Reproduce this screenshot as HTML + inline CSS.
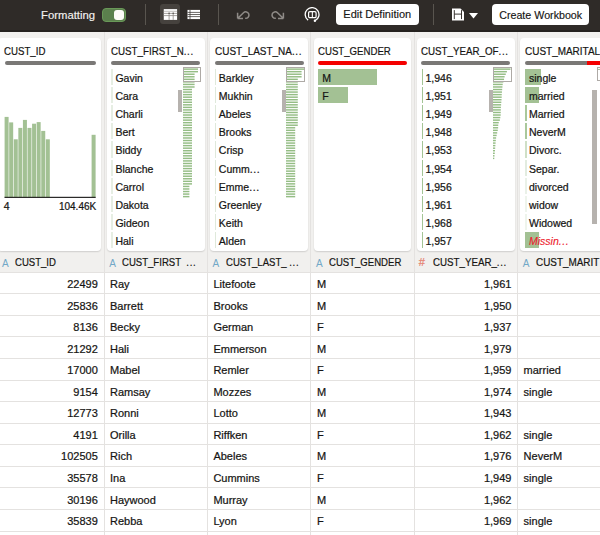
<!DOCTYPE html><html><head><meta charset="utf-8"><style>
*{box-sizing:border-box;margin:0;padding:0}
html,body{width:600px;height:535px;overflow:hidden}
body{position:relative;background:#f1f0ee;font-family:"Liberation Sans",sans-serif;color:#161513}
.a{position:absolute}
.t{position:absolute;white-space:nowrap;line-height:1}
#tb{position:absolute;left:0;top:0;width:600px;height:31.5px;background:#2f2b28}
.vsep{position:absolute;width:1px;background:#59554f}
.btn{position:absolute;background:#fff;border-radius:4px}
.card{position:absolute;top:37.9px;height:212.9px;background:#fff;border-radius:4px;box-shadow:0 1px 1.5px rgba(0,0,0,0.14)}
.up{font-size:11px;transform:scaleX(0.87);transform-origin:0 0;-webkit-text-stroke:0.2px #161513}
.bar{position:absolute;height:4.2px;border-radius:2.1px;background:#7a7876}
.rt{font-size:10.5px;-webkit-text-stroke:0.22px #161513}
.tc{font-size:11px;-webkit-text-stroke:0.22px #161513}
</style></head><body>
<div id="tb">
<div class="t" style="left:41.1px;top:9.5px;font-size:11.3px;color:#f4f2f0;-webkit-text-stroke:0.15px #f4f2f0">Formatting</div>
<div class="a" style="left:101.7px;top:7.6px;width:24.2px;height:14px;border-radius:4px;background:#5b804d;border:1px solid #699858"></div>
<div class="a" style="left:113.8px;top:9.6px;width:10.4px;height:10.2px;border-radius:3px;background:#fcfaf8"></div>
<div class="vsep" style="left:144.5px;top:4.1px;height:20.8px"></div>
<div class="a" style="left:159.6px;top:4.1px;width:20.4px;height:20.4px;border-radius:3px;background:#46423e"></div>
<svg class="a" style="left:163px;top:8px" width="15" height="13" viewBox="0 0 15 13">
<rect x="0.75" y="1.1" width="13.35" height="10.8" fill="#fff"/>
<path d="M0.75 3.3H14.1" stroke="#a8a4a0" stroke-width="0.7"/>
<path d="M0.75 5.4H14.1 M0.75 7.6H14.1" stroke="#8a8682" stroke-width="0.75"/>
<path d="M6.1 4.2V11.9 M10.2 4.2V11.9" stroke="#8a8682" stroke-width="0.8"/>
<path d="M5.4 5.4H6.8 M9.5 5.4H10.9" stroke="#5a5652" stroke-width="1"/>
</svg>
<svg class="a" style="left:187px;top:9px" width="14" height="11" viewBox="0 0 14 11">
<rect x="0.5" y="0.9" width="12.5" height="9.2" fill="#fff"/>
<path d="M0.5 3.4H13 M0.5 5.5H13 M0.5 7.6H13" stroke="#3a3632" stroke-width="0.75"/>
<path d="M3 0.9V10.1" stroke="#3a3632" stroke-width="0.8"/>
</svg>
<div class="vsep" style="left:218px;top:4.1px;height:20.8px"></div>
<svg class="a" style="left:235.5px;top:9px" width="16" height="12" viewBox="0 0 16 12"><path d="M1.6 9.5H7.0 M1.6 9.5V3.8 M1.6 9.5L7.49 3.79 A3.2 3.2 0 1 1 9.19 9.2" fill="none" stroke="#8f8b87" stroke-width="1.5" stroke-linecap="butt" stroke-linejoin="miter"/></svg>
<svg class="a" style="left:268.9px;top:9px;transform:scaleX(-1)" width="16" height="12" viewBox="0 0 16 12"><path d="M1.6 9.5H7.0 M1.6 9.5V3.8 M1.6 9.5L7.49 3.79 A3.2 3.2 0 1 1 9.19 9.2" fill="none" stroke="#8f8b87" stroke-width="1.5" stroke-linecap="butt" stroke-linejoin="miter"/></svg>
<svg class="a" style="left:304px;top:7px" width="17" height="17" viewBox="0 0 17 17">
<path d="M4.14 13.15 A6.9 6.9 0 1 1 11.02 13.75" fill="none" stroke="#fff" stroke-width="1.3"/>
<rect x="4.6" y="4.6" width="7.5" height="6.1" rx="1.3" fill="none" stroke="#fff" stroke-width="1.2"/>
<path d="M8.35 4.6v6.1" stroke="#fff" stroke-width="1.1"/>
<circle cx="10.9" cy="13.7" r="1.2" fill="#fff"/>
</svg>
<div class="btn" style="left:336.2px;top:4.2px;width:83px;height:20.8px"></div>
<div class="t" style="left:343.3px;top:9.4px;font-size:11px;color:#161513;-webkit-text-stroke:0.15px #161513">Edit Definition</div>
<div class="vsep" style="left:433px;top:4.1px;height:20.8px"></div>
<svg class="a" style="left:452px;top:8px" width="13" height="13" viewBox="0 0 13 13">
<path d="M0 0.4H8.5L12 3.9V12.6H0Z" fill="#fff"/>
<path d="M2.3 2.1V11.1 M9.5 2.1V11.1 M2.3 6.1H9.5" fill="none" stroke="#2f2b28" stroke-width="0.95"/>
</svg>
<svg class="a" style="left:469.3px;top:12.7px" width="9" height="6" viewBox="0 0 9 6"><path d="M0 0H9L4.5 5.6Z" fill="#fff"/></svg>
<div class="btn" style="left:492px;top:4px;width:97.3px;height:20.8px"></div>
<div class="t" style="left:499.2px;top:9.5px;font-size:10.7px;color:#161513;-webkit-text-stroke:0.15px #161513">Create Workbook</div>
<div class="a" style="left:0;top:30px;width:600px;height:1.5px;background:#25221f"></div>
</div>
<div class="a" style="left:103.5px;top:31.5px;width:1px;height:504px;background:#e4e2e0"></div>
<div class="a" style="left:206.9px;top:31.5px;width:1px;height:504px;background:#e4e2e0"></div>
<div class="a" style="left:310.4px;top:31.5px;width:1px;height:504px;background:#e4e2e0"></div>
<div class="a" style="left:413.6px;top:31.5px;width:1px;height:504px;background:#e4e2e0"></div>
<div class="a" style="left:517.1px;top:31.5px;width:1px;height:504px;background:#e4e2e0"></div>
<div class="card" style="left:-2px;width:103.2px"></div>
<div class="t up" style="left:3.6px;top:46.0px;transform:scaleX(0.88)">CUST_ID</div>
<div class="bar" style="left:4.5px;top:61.3px;width:91.3px"></div>
<div class="card" style="left:106.8px;width:97.8px"></div>
<div class="t up" style="left:111.2px;top:46.0px;transform:scaleX(0.888)">CUST_FIRST_N<span style="letter-spacing:0.75px">...</span></div>
<div class="bar" style="left:111.1px;top:61.3px;width:89.19999999999999px"></div>
<div class="card" style="left:210.20000000000002px;width:97.89999999999995px"></div>
<div class="t up" style="left:214.60000000000002px;top:46.0px;transform:scaleX(0.905)">CUST_LAST_NA<span style="letter-spacing:0.75px">...</span></div>
<div class="bar" style="left:214.50000000000003px;top:61.3px;width:89.29999999999993px"></div>
<div class="card" style="left:313.7px;width:97.60000000000002px"></div>
<div class="t up" style="left:318.09999999999997px;top:46.0px;transform:scaleX(0.876)">CUST_GENDER</div>
<div class="bar" style="left:318.0px;top:61.3px;width:89.0px;background:#f40000"></div>
<div class="card" style="left:416.90000000000003px;width:97.90000000000003px"></div>
<div class="t up" style="left:421.3px;top:46.0px;transform:scaleX(0.887)">CUST_YEAR_OF<span style="letter-spacing:0.75px">...</span></div>
<div class="bar" style="left:421.20000000000005px;top:61.3px;width:89.30000000000001px"></div>
<div class="card" style="left:520.4px;width:119.60000000000002px"></div>
<div class="t up" style="left:524.8px;top:46.0px;transform:scaleX(0.906)">CUST_MARITAL</div>
<div class="bar" style="left:524.6999999999999px;top:61.3px;width:62.200000000000045px;border-radius:2.1px 0 0 2.1px"></div>
<div class="a" style="left:586.9px;top:61.3px;width:14px;height:4.2px;background:#f40000"></div>
<svg class="a" style="left:0;top:100px" width="100" height="100" viewBox="0 100 100 100"><rect x="4.60" y="116.9" width="4.0" height="80.4" fill="#a3c194"/><rect x="9.18" y="122.4" width="4.0" height="74.9" fill="#a3c194"/><rect x="13.76" y="139.3" width="4.0" height="58.0" fill="#a3c194"/><rect x="18.34" y="127.9" width="4.0" height="69.4" fill="#a3c194"/><rect x="22.92" y="119.9" width="4.0" height="77.4" fill="#a3c194"/><rect x="27.50" y="127.9" width="4.0" height="69.4" fill="#a3c194"/><rect x="32.08" y="123.7" width="4.0" height="73.6" fill="#a3c194"/><rect x="36.66" y="122.1" width="4.0" height="75.2" fill="#a3c194"/><rect x="41.24" y="130.9" width="4.0" height="66.4" fill="#a3c194"/><rect x="45.82" y="139.3" width="4.0" height="58.0" fill="#a3c194"/><rect x="91.6" y="134.8" width="4.0" height="62.5" fill="#a3c194"/><rect x="4.5" y="196.8" width="91.2" height="1.1" fill="#161513"/></svg>
<div class="t rt" style="left:3.8px;top:201.2px">4</div>
<div class="t rt" style="right:503.8px;top:201.6px;font-size:10px">104.46K</div>
<div class="a" style="left:111.39999999999999px;top:69.1px;width:1.2px;height:16.1px;background:#e6eee3"></div>
<div class="t rt" style="left:115.39999999999999px;top:73.1px;">Gavin</div>
<div class="a" style="left:111.39999999999999px;top:87.17999999999999px;width:1.2px;height:16.1px;background:#e6eee3"></div>
<div class="t rt" style="left:115.39999999999999px;top:91.17999999999999px;">Cara</div>
<div class="a" style="left:111.39999999999999px;top:105.25999999999999px;width:1.2px;height:16.1px;background:#e6eee3"></div>
<div class="t rt" style="left:115.39999999999999px;top:109.25999999999999px;">Charli</div>
<div class="a" style="left:111.39999999999999px;top:123.33999999999999px;width:1.2px;height:16.1px;background:#e6eee3"></div>
<div class="t rt" style="left:115.39999999999999px;top:127.33999999999999px;">Bert</div>
<div class="a" style="left:111.39999999999999px;top:141.42px;width:1.2px;height:16.1px;background:#e6eee3"></div>
<div class="t rt" style="left:115.39999999999999px;top:145.42px;">Biddy</div>
<div class="a" style="left:111.39999999999999px;top:159.5px;width:1.2px;height:16.1px;background:#e6eee3"></div>
<div class="t rt" style="left:115.39999999999999px;top:163.5px;">Blanche</div>
<div class="a" style="left:111.39999999999999px;top:177.57999999999998px;width:1.2px;height:16.1px;background:#e6eee3"></div>
<div class="t rt" style="left:115.39999999999999px;top:181.57999999999998px;">Carrol</div>
<div class="a" style="left:111.39999999999999px;top:195.65999999999997px;width:1.2px;height:16.1px;background:#e6eee3"></div>
<div class="t rt" style="left:115.39999999999999px;top:199.65999999999997px;">Dakota</div>
<div class="a" style="left:111.39999999999999px;top:213.73999999999998px;width:1.2px;height:16.1px;background:#e6eee3"></div>
<div class="t rt" style="left:115.39999999999999px;top:217.73999999999998px;">Gideon</div>
<div class="a" style="left:111.39999999999999px;top:231.81999999999996px;width:1.2px;height:16.1px;background:#e6eee3"></div>
<div class="t rt" style="left:115.39999999999999px;top:235.81999999999996px;">Hali</div>
<div class="a" style="left:214.8px;top:69.1px;width:1.2px;height:16.1px;background:#dfe9db"></div>
<div class="t rt" style="left:218.8px;top:73.1px;">Barkley</div>
<div class="a" style="left:214.8px;top:87.17999999999999px;width:1.2px;height:16.1px;background:#dfe9db"></div>
<div class="t rt" style="left:218.8px;top:91.17999999999999px;">Mukhin</div>
<div class="a" style="left:214.8px;top:105.25999999999999px;width:1.2px;height:16.1px;background:#dfe9db"></div>
<div class="t rt" style="left:218.8px;top:109.25999999999999px;">Abeles</div>
<div class="a" style="left:214.8px;top:123.33999999999999px;width:1.2px;height:16.1px;background:#dfe9db"></div>
<div class="t rt" style="left:218.8px;top:127.33999999999999px;">Brooks</div>
<div class="a" style="left:214.8px;top:141.42px;width:1.2px;height:16.1px;background:#dfe9db"></div>
<div class="t rt" style="left:218.8px;top:145.42px;">Crisp</div>
<div class="a" style="left:214.8px;top:159.5px;width:1.2px;height:16.1px;background:#dfe9db"></div>
<div class="t rt" style="left:218.8px;top:163.5px;">Cumm<span style=letter-spacing:0.6px>...</span></div>
<div class="a" style="left:214.8px;top:177.57999999999998px;width:1.2px;height:16.1px;background:#dfe9db"></div>
<div class="t rt" style="left:218.8px;top:181.57999999999998px;">Emme<span style=letter-spacing:0.6px>...</span></div>
<div class="a" style="left:214.8px;top:195.65999999999997px;width:1.2px;height:16.1px;background:#dfe9db"></div>
<div class="t rt" style="left:218.8px;top:199.65999999999997px;">Greenley</div>
<div class="a" style="left:214.8px;top:213.73999999999998px;width:1.2px;height:16.1px;background:#dfe9db"></div>
<div class="t rt" style="left:218.8px;top:217.73999999999998px;">Keith</div>
<div class="a" style="left:214.8px;top:231.81999999999996px;width:1.2px;height:16.1px;background:#dfe9db"></div>
<div class="t rt" style="left:218.8px;top:235.81999999999996px;">Alden</div>
<div class="a" style="left:317.9px;top:69.3px;width:59.2px;height:15.8px;background:#a3c194"></div>
<div class="t rt" style="left:322.3px;top:73.1px;">M</div>
<div class="a" style="left:317.9px;top:87.38px;width:30.0px;height:15.8px;background:#a3c194"></div>
<div class="t rt" style="left:322.3px;top:91.17999999999999px;">F</div>
<div class="a" style="left:421.50000000000006px;top:69.1px;width:1.8px;height:16.1px;background:#a3c495"></div>
<div class="t rt" style="left:425.50000000000006px;top:73.1px;">1,946</div>
<div class="a" style="left:421.50000000000006px;top:87.17999999999999px;width:1.8px;height:16.1px;background:#a3c495"></div>
<div class="t rt" style="left:425.50000000000006px;top:91.17999999999999px;">1,951</div>
<div class="a" style="left:421.50000000000006px;top:105.25999999999999px;width:1.8px;height:16.1px;background:#a3c495"></div>
<div class="t rt" style="left:425.50000000000006px;top:109.25999999999999px;">1,949</div>
<div class="a" style="left:421.50000000000006px;top:123.33999999999999px;width:1.8px;height:16.1px;background:#a3c495"></div>
<div class="t rt" style="left:425.50000000000006px;top:127.33999999999999px;">1,948</div>
<div class="a" style="left:421.50000000000006px;top:141.42px;width:1.8px;height:16.1px;background:#a3c495"></div>
<div class="t rt" style="left:425.50000000000006px;top:145.42px;">1,953</div>
<div class="a" style="left:421.50000000000006px;top:159.5px;width:1.8px;height:16.1px;background:#a3c495"></div>
<div class="t rt" style="left:425.50000000000006px;top:163.5px;">1,954</div>
<div class="a" style="left:421.50000000000006px;top:177.57999999999998px;width:1.8px;height:16.1px;background:#a3c495"></div>
<div class="t rt" style="left:425.50000000000006px;top:181.57999999999998px;">1,956</div>
<div class="a" style="left:421.50000000000006px;top:195.65999999999997px;width:1.8px;height:16.1px;background:#a3c495"></div>
<div class="t rt" style="left:425.50000000000006px;top:199.65999999999997px;">1,961</div>
<div class="a" style="left:421.50000000000006px;top:213.73999999999998px;width:1.8px;height:16.1px;background:#a3c495"></div>
<div class="t rt" style="left:425.50000000000006px;top:217.73999999999998px;">1,968</div>
<div class="a" style="left:421.50000000000006px;top:231.81999999999996px;width:1.8px;height:16.1px;background:#a3c495"></div>
<div class="t rt" style="left:425.50000000000006px;top:235.81999999999996px;">1,957</div>
<div class="a" style="left:524.6px;top:69.3px;width:16px;height:15.8px;background:#a3c194"></div>
<div class="t rt" style="left:529.0px;top:73.1px;">single</div>
<div class="a" style="left:524.6px;top:87.38px;width:14px;height:15.8px;background:#a3c194"></div>
<div class="t rt" style="left:529.0px;top:91.17999999999999px;">married</div>
<div class="a" style="left:525.0px;top:105.25999999999999px;width:1.8px;height:16.1px;background:#a9c89b"></div>
<div class="t rt" style="left:529.0px;top:109.25999999999999px;">Married</div>
<div class="a" style="left:525.0px;top:123.33999999999999px;width:1.8px;height:16.1px;background:#a9c89b"></div>
<div class="t rt" style="left:529.0px;top:127.33999999999999px;">NeverM</div>
<div class="a" style="left:525.0px;top:141.42px;width:1.8px;height:16.1px;background:#cfe0c7"></div>
<div class="t rt" style="left:529.0px;top:145.42px;">Divorc.</div>
<div class="a" style="left:525.0px;top:159.5px;width:1.8px;height:16.1px;background:#e2ece0"></div>
<div class="t rt" style="left:529.0px;top:163.5px;">Separ.</div>
<div class="a" style="left:525.0px;top:177.57999999999998px;width:1.8px;height:16.1px;background:#eaf1e8"></div>
<div class="t rt" style="left:529.0px;top:181.57999999999998px;">divorced</div>
<div class="a" style="left:525.0px;top:195.65999999999997px;width:1.8px;height:16.1px;background:#eef4ec"></div>
<div class="t rt" style="left:529.0px;top:199.65999999999997px;">widow</div>
<div class="a" style="left:525.0px;top:213.73999999999998px;width:1.8px;height:16.1px;background:#eef4ec"></div>
<div class="t rt" style="left:529.0px;top:217.73999999999998px;">Widowed</div>
<div class="a" style="left:524.6px;top:232.01999999999995px;width:14.6px;height:15.8px;background:#a3c194"></div>
<div class="t rt" style="left:529.0px;top:235.81999999999996px;color:#ee1c2e;font-style:italic;-webkit-text-stroke:0.15px #ee1c2e;">Missin<span style=letter-spacing:0.6px>...</span></div>
<svg class="a" style="left:177.1px;top:60px" width="30" height="140" viewBox="177.1 60 30 140"><rect x="183.1" y="68.40" width="15.00" height="1.45" fill="#95bd85"/><rect x="183.1" y="70.95" width="15.00" height="1.45" fill="#95bd85"/><rect x="183.1" y="73.50" width="11.60" height="1.45" fill="#95bd85"/><rect x="183.1" y="76.05" width="11.60" height="1.45" fill="#95bd85"/><rect x="183.1" y="78.60" width="11.60" height="1.45" fill="#95bd85"/><rect x="183.1" y="81.15" width="11.60" height="1.45" fill="#95bd85"/><rect x="183.1" y="83.70" width="11.60" height="1.45" fill="#95bd85"/><rect x="183.1" y="86.25" width="11.60" height="1.45" fill="#95bd85"/><rect x="183.1" y="88.80" width="9.00" height="1.45" fill="#95bd85"/><rect x="183.1" y="91.35" width="9.00" height="1.45" fill="#95bd85"/><rect x="183.1" y="93.90" width="9.00" height="1.45" fill="#95bd85"/><rect x="183.1" y="96.45" width="9.00" height="1.45" fill="#95bd85"/><rect x="183.1" y="99.00" width="9.00" height="1.45" fill="#95bd85"/><rect x="183.1" y="101.55" width="9.00" height="1.45" fill="#95bd85"/><rect x="183.1" y="104.10" width="9.00" height="1.45" fill="#95bd85"/><rect x="183.1" y="106.65" width="9.00" height="1.45" fill="#95bd85"/><rect x="183.1" y="109.20" width="9.00" height="1.45" fill="#95bd85"/><rect x="183.1" y="111.75" width="9.00" height="1.45" fill="#95bd85"/><rect x="183.1" y="114.30" width="9.00" height="1.45" fill="#95bd85"/><rect x="183.1" y="116.85" width="9.00" height="1.45" fill="#95bd85"/><rect x="183.1" y="119.40" width="9.00" height="1.45" fill="#95bd85"/><rect x="183.1" y="121.95" width="9.00" height="1.45" fill="#95bd85"/><rect x="183.1" y="124.50" width="9.00" height="1.45" fill="#95bd85"/><rect x="183.1" y="127.05" width="9.00" height="1.45" fill="#95bd85"/><rect x="183.1" y="129.60" width="9.00" height="1.45" fill="#95bd85"/><rect x="183.1" y="132.15" width="9.00" height="1.45" fill="#95bd85"/><rect x="183.1" y="134.70" width="9.00" height="1.45" fill="#95bd85"/><rect x="183.1" y="137.25" width="9.00" height="1.45" fill="#95bd85"/><rect x="183.1" y="139.80" width="9.00" height="1.45" fill="#95bd85"/><rect x="183.1" y="142.35" width="9.00" height="1.45" fill="#95bd85"/><rect x="183.1" y="144.90" width="9.00" height="1.45" fill="#95bd85"/><rect x="183.1" y="147.45" width="9.00" height="1.45" fill="#95bd85"/><rect x="183.1" y="150.00" width="9.00" height="1.45" fill="#95bd85"/><rect x="183.1" y="152.55" width="9.00" height="1.45" fill="#95bd85"/><rect x="183.1" y="155.10" width="9.00" height="1.45" fill="#95bd85"/><rect x="183.1" y="157.65" width="9.00" height="1.45" fill="#95bd85"/><rect x="183.1" y="160.20" width="9.00" height="1.45" fill="#95bd85"/><rect x="183.1" y="162.75" width="9.00" height="1.45" fill="#95bd85"/><rect x="183.1" y="165.30" width="9.00" height="1.45" fill="#95bd85"/><rect x="183.1" y="167.85" width="9.00" height="1.45" fill="#95bd85"/><rect x="183.1" y="170.40" width="9.00" height="1.45" fill="#95bd85"/><rect x="183.1" y="172.95" width="9.00" height="1.45" fill="#95bd85"/><rect x="183.1" y="175.50" width="9.00" height="1.45" fill="#95bd85"/><rect x="183.1" y="178.05" width="9.00" height="1.45" fill="#95bd85"/><rect x="183.1" y="180.60" width="9.00" height="1.45" fill="#95bd85"/><rect x="183.1" y="183.15" width="9.00" height="1.45" fill="#95bd85"/><rect x="183.1" y="185.70" width="6.40" height="1.45" fill="#95bd85"/><rect x="183.1" y="188.25" width="6.40" height="1.45" fill="#95bd85"/><rect x="183.1" y="190.80" width="6.40" height="1.45" fill="#95bd85"/><rect x="183.1" y="193.35" width="6.40" height="1.45" fill="#95bd85"/><rect x="183.1" y="195.90" width="6.40" height="1.45" fill="#95bd85"/></svg>
<div class="a" style="left:183.1px;top:67.4px;width:18.3px;height:14.4px;border:1px solid #aeaaa6"></div>
<div class="a" style="left:178.4px;top:89.8px;width:3.9px;height:21.8px;background:#b6b2ae"></div>
<svg class="a" style="left:280.2px;top:60px" width="30" height="140" viewBox="280.2 60 30 140"><rect x="286.2" y="68.40" width="18.00" height="1.45" fill="#95bd85"/><rect x="286.2" y="70.95" width="15.60" height="1.45" fill="#95bd85"/><rect x="286.2" y="73.50" width="15.60" height="1.45" fill="#95bd85"/><rect x="286.2" y="76.05" width="15.60" height="1.45" fill="#95bd85"/><rect x="286.2" y="78.60" width="11.80" height="1.45" fill="#95bd85"/><rect x="286.2" y="81.15" width="11.80" height="1.45" fill="#95bd85"/><rect x="286.2" y="83.70" width="11.80" height="1.45" fill="#95bd85"/><rect x="286.2" y="86.25" width="11.80" height="1.45" fill="#95bd85"/><rect x="286.2" y="88.80" width="11.80" height="1.45" fill="#95bd85"/><rect x="286.2" y="91.35" width="11.80" height="1.45" fill="#95bd85"/><rect x="286.2" y="93.90" width="11.80" height="1.45" fill="#95bd85"/><rect x="286.2" y="96.45" width="11.80" height="1.45" fill="#95bd85"/><rect x="286.2" y="99.00" width="11.80" height="1.45" fill="#95bd85"/><rect x="286.2" y="101.55" width="11.80" height="1.45" fill="#95bd85"/><rect x="286.2" y="104.10" width="11.80" height="1.45" fill="#95bd85"/><rect x="286.2" y="106.65" width="11.80" height="1.45" fill="#95bd85"/><rect x="286.2" y="109.20" width="11.80" height="1.45" fill="#95bd85"/><rect x="286.2" y="111.75" width="11.80" height="1.45" fill="#95bd85"/><rect x="286.2" y="114.30" width="11.80" height="1.45" fill="#95bd85"/><rect x="286.2" y="116.85" width="11.80" height="1.45" fill="#95bd85"/><rect x="286.2" y="119.40" width="11.80" height="1.45" fill="#95bd85"/><rect x="286.2" y="121.95" width="11.80" height="1.45" fill="#95bd85"/><rect x="286.2" y="124.50" width="11.80" height="1.45" fill="#95bd85"/><rect x="286.2" y="127.05" width="9.20" height="1.45" fill="#95bd85"/><rect x="286.2" y="129.60" width="9.20" height="1.45" fill="#95bd85"/><rect x="286.2" y="132.15" width="9.20" height="1.45" fill="#95bd85"/><rect x="286.2" y="134.70" width="9.20" height="1.45" fill="#95bd85"/><rect x="286.2" y="137.25" width="9.20" height="1.45" fill="#95bd85"/><rect x="286.2" y="139.80" width="9.20" height="1.45" fill="#95bd85"/><rect x="286.2" y="142.35" width="9.20" height="1.45" fill="#95bd85"/><rect x="286.2" y="144.90" width="9.20" height="1.45" fill="#95bd85"/><rect x="286.2" y="147.45" width="9.20" height="1.45" fill="#95bd85"/><rect x="286.2" y="150.00" width="9.20" height="1.45" fill="#95bd85"/><rect x="286.2" y="152.55" width="9.20" height="1.45" fill="#95bd85"/><rect x="286.2" y="155.10" width="9.20" height="1.45" fill="#95bd85"/><rect x="286.2" y="157.65" width="9.20" height="1.45" fill="#95bd85"/><rect x="286.2" y="160.20" width="9.20" height="1.45" fill="#95bd85"/><rect x="286.2" y="162.75" width="9.20" height="1.45" fill="#95bd85"/><rect x="286.2" y="165.30" width="9.20" height="1.45" fill="#95bd85"/><rect x="286.2" y="167.85" width="9.20" height="1.45" fill="#95bd85"/><rect x="286.2" y="170.40" width="9.20" height="1.45" fill="#95bd85"/><rect x="286.2" y="172.95" width="9.20" height="1.45" fill="#95bd85"/><rect x="286.2" y="175.50" width="9.20" height="1.45" fill="#95bd85"/><rect x="286.2" y="178.05" width="9.20" height="1.45" fill="#95bd85"/><rect x="286.2" y="180.60" width="9.20" height="1.45" fill="#95bd85"/><rect x="286.2" y="183.15" width="9.20" height="1.45" fill="#95bd85"/><rect x="286.2" y="185.70" width="9.20" height="1.45" fill="#95bd85"/><rect x="286.2" y="188.25" width="9.20" height="1.45" fill="#95bd85"/><rect x="286.2" y="190.80" width="9.20" height="1.45" fill="#95bd85"/><rect x="286.2" y="193.35" width="9.20" height="1.45" fill="#95bd85"/><rect x="286.2" y="195.90" width="9.20" height="1.45" fill="#95bd85"/></svg>
<div class="a" style="left:286.2px;top:67.4px;width:18.7px;height:14.4px;border:1px solid #aeaaa6"></div>
<div class="a" style="left:282.1px;top:89.8px;width:3.9px;height:21.8px;background:#b6b2ae"></div>
<svg class="a" style="left:487.3px;top:60px" width="30" height="140" viewBox="487.3 60 30 140"><rect x="493.3" y="68.40" width="17.48" height="1.45" fill="#95bd85"/><rect x="493.3" y="70.95" width="13.91" height="1.45" fill="#95bd85"/><rect x="493.3" y="73.50" width="12.78" height="1.45" fill="#95bd85"/><rect x="493.3" y="76.05" width="11.63" height="1.45" fill="#95bd85"/><rect x="493.3" y="78.60" width="11.04" height="1.45" fill="#95bd85"/><rect x="493.3" y="81.15" width="10.38" height="1.45" fill="#95bd85"/><rect x="493.3" y="83.70" width="9.71" height="1.45" fill="#95bd85"/><rect x="493.3" y="86.25" width="9.45" height="1.45" fill="#95bd85"/><rect x="493.3" y="88.80" width="9.20" height="1.45" fill="#95bd85"/><rect x="493.3" y="91.35" width="8.96" height="1.45" fill="#95bd85"/><rect x="493.3" y="93.90" width="8.73" height="1.45" fill="#95bd85"/><rect x="493.3" y="96.45" width="8.70" height="1.45" fill="#95bd85"/><rect x="493.3" y="99.00" width="8.53" height="1.45" fill="#95bd85"/><rect x="493.3" y="101.55" width="8.32" height="1.45" fill="#95bd85"/><rect x="493.3" y="104.10" width="8.12" height="1.45" fill="#95bd85"/><rect x="493.3" y="106.65" width="7.91" height="1.45" fill="#95bd85"/><rect x="493.3" y="109.20" width="7.84" height="1.45" fill="#95bd85"/><rect x="493.3" y="111.75" width="7.77" height="1.45" fill="#95bd85"/><rect x="493.3" y="114.30" width="7.71" height="1.45" fill="#95bd85"/><rect x="493.3" y="116.85" width="7.32" height="1.45" fill="#95bd85"/><rect x="493.3" y="119.40" width="6.85" height="1.45" fill="#95bd85"/><rect x="493.3" y="121.95" width="5.75" height="1.45" fill="#95bd85"/><rect x="493.3" y="124.50" width="5.24" height="1.45" fill="#95bd85"/><rect x="493.3" y="127.05" width="5.14" height="1.45" fill="#95bd85"/><rect x="493.3" y="129.60" width="4.77" height="1.45" fill="#95bd85"/><rect x="493.3" y="132.15" width="4.20" height="1.45" fill="#95bd85"/><rect x="493.3" y="134.70" width="3.65" height="1.45" fill="#95bd85"/><rect x="493.3" y="137.25" width="3.11" height="1.45" fill="#95bd85"/><rect x="493.3" y="139.80" width="2.82" height="1.45" fill="#95bd85"/><rect x="493.3" y="142.35" width="2.59" height="1.45" fill="#95bd85"/><rect x="493.3" y="144.90" width="2.38" height="1.45" fill="#95bd85"/><rect x="493.3" y="147.45" width="2.19" height="1.45" fill="#95bd85"/><rect x="493.3" y="150.00" width="1.99" height="1.45" fill="#95bd85"/><rect x="493.3" y="152.55" width="1.77" height="1.45" fill="#95bd85"/><rect x="493.3" y="155.10" width="1.51" height="1.45" fill="#95bd85"/><rect x="493.3" y="157.65" width="1.30" height="1.45" fill="#95bd85"/></svg>
<div class="a" style="left:493.3px;top:67.4px;width:18.5px;height:14.4px;border:1px solid #aeaaa6"></div>
<div class="a" style="left:489px;top:89.8px;width:3.9px;height:21.8px;background:#b6b2ae"></div>
<div class="a" style="left:592.1px;top:89.8px;width:4.5px;height:134px;background:#b6b2ae"></div>
<div class="a" style="left:596.6px;top:67.4px;width:10px;height:14px;border:1px solid #aeaaa6"></div>
<div class="a" style="left:597.6px;top:68.6px;width:3px;height:1.5px;background:#a9c79c"></div>
<div class="t" style="left:2.0px;top:259.0px;font-size:10px;color:#72a8c7">A</div>
<div class="t up" style="left:15.2px;top:257.0px;transform:scaleX(0.87)">CUST_ID</div>
<div class="t" style="left:109.2px;top:259.0px;font-size:10px;color:#72a8c7">A</div>
<div class="t up" style="left:122.4px;top:257.0px;transform:scaleX(0.87)">CUST_FIRST&nbsp; <span style="letter-spacing:0.75px">...</span></div>
<div class="t" style="left:212.6px;top:259.0px;font-size:10px;color:#72a8c7">A</div>
<div class="t up" style="left:225.8px;top:257.0px;transform:scaleX(0.87)">CUST_LAST_&nbsp;<span style="letter-spacing:0.75px">...</span></div>
<div class="t" style="left:316.09999999999997px;top:259.0px;font-size:10px;color:#72a8c7">A</div>
<div class="t up" style="left:329.29999999999995px;top:257.0px;transform:scaleX(0.87)">CUST_GENDER</div>
<div class="t" style="left:418.70000000000005px;top:257.2px;font-size:11px;color:#e57c6b;-webkit-text-stroke:0.2px #e57c6b">#</div>
<div class="t up" style="left:432.5px;top:257.0px;transform:scaleX(0.885)">CUST_YEAR_<span style="letter-spacing:0.75px">...</span></div>
<div class="t" style="left:522.8000000000001px;top:259.0px;font-size:10px;color:#72a8c7">A</div>
<div class="t up" style="left:536.0px;top:257.0px;transform:scaleX(0.9)">CUST_MARIT</div>
<div class="a" style="left:0;top:272.3px;width:600px;height:270px;background:#fff"></div>
<div class="a" style="left:103.5px;top:250.5px;width:1px;height:290px;background:#e4e2e0"></div>
<div class="a" style="left:206.9px;top:250.5px;width:1px;height:290px;background:#e4e2e0"></div>
<div class="a" style="left:310.4px;top:250.5px;width:1px;height:290px;background:#e4e2e0"></div>
<div class="a" style="left:413.6px;top:250.5px;width:1px;height:290px;background:#e4e2e0"></div>
<div class="a" style="left:517.1px;top:250.5px;width:1px;height:290px;background:#e4e2e0"></div>
<div class="a" style="left:0;top:271.80px;width:600px;height:1px;background:#e4e2e0"></div>
<div class="a" style="left:0;top:293.36px;width:600px;height:1px;background:#e4e2e0"></div>
<div class="a" style="left:0;top:314.92px;width:600px;height:1px;background:#e4e2e0"></div>
<div class="a" style="left:0;top:336.48px;width:600px;height:1px;background:#e4e2e0"></div>
<div class="a" style="left:0;top:358.04px;width:600px;height:1px;background:#e4e2e0"></div>
<div class="a" style="left:0;top:379.60px;width:600px;height:1px;background:#e4e2e0"></div>
<div class="a" style="left:0;top:401.16px;width:600px;height:1px;background:#e4e2e0"></div>
<div class="a" style="left:0;top:422.72px;width:600px;height:1px;background:#e4e2e0"></div>
<div class="a" style="left:0;top:444.28px;width:600px;height:1px;background:#e4e2e0"></div>
<div class="a" style="left:0;top:465.84px;width:600px;height:1px;background:#e4e2e0"></div>
<div class="a" style="left:0;top:487.40px;width:600px;height:1px;background:#e4e2e0"></div>
<div class="a" style="left:0;top:508.96px;width:600px;height:1px;background:#e4e2e0"></div>
<div class="a" style="left:0;top:530.52px;width:600px;height:1px;background:#e4e2e0"></div>
<div class="t tc" style="right:502.2px;top:279.00px">22499</div>
<div class="t tc" style="left:110.0px;top:279.00px">Ray</div>
<div class="t tc" style="left:213.4px;top:279.00px">Litefoote</div>
<div class="t tc" style="left:316.9px;top:279.00px">M</div>
<div class="t tc" style="right:88.6px;top:279.00px">1,961</div>
<div class="t tc" style="right:502.2px;top:300.56px">25836</div>
<div class="t tc" style="left:110.0px;top:300.56px">Barrett</div>
<div class="t tc" style="left:213.4px;top:300.56px">Brooks</div>
<div class="t tc" style="left:316.9px;top:300.56px">M</div>
<div class="t tc" style="right:88.6px;top:300.56px">1,950</div>
<div class="t tc" style="right:502.2px;top:322.12px">8136</div>
<div class="t tc" style="left:110.0px;top:322.12px">Becky</div>
<div class="t tc" style="left:213.4px;top:322.12px">German</div>
<div class="t tc" style="left:316.9px;top:322.12px">F</div>
<div class="t tc" style="right:88.6px;top:322.12px">1,937</div>
<div class="t tc" style="right:502.2px;top:343.68px">21292</div>
<div class="t tc" style="left:110.0px;top:343.68px">Hali</div>
<div class="t tc" style="left:213.4px;top:343.68px">Emmerson</div>
<div class="t tc" style="left:316.9px;top:343.68px">M</div>
<div class="t tc" style="right:88.6px;top:343.68px">1,979</div>
<div class="t tc" style="right:502.2px;top:365.24px">17000</div>
<div class="t tc" style="left:110.0px;top:365.24px">Mabel</div>
<div class="t tc" style="left:213.4px;top:365.24px">Remler</div>
<div class="t tc" style="left:316.9px;top:365.24px">F</div>
<div class="t tc" style="right:88.6px;top:365.24px">1,959</div>
<div class="t tc" style="left:523.6px;top:365.24px">married</div>
<div class="t tc" style="right:502.2px;top:386.80px">9154</div>
<div class="t tc" style="left:110.0px;top:386.80px">Ramsay</div>
<div class="t tc" style="left:213.4px;top:386.80px">Mozzes</div>
<div class="t tc" style="left:316.9px;top:386.80px">M</div>
<div class="t tc" style="right:88.6px;top:386.80px">1,974</div>
<div class="t tc" style="left:523.6px;top:386.80px">single</div>
<div class="t tc" style="right:502.2px;top:408.36px">12773</div>
<div class="t tc" style="left:110.0px;top:408.36px">Ronni</div>
<div class="t tc" style="left:213.4px;top:408.36px">Lotto</div>
<div class="t tc" style="left:316.9px;top:408.36px">M</div>
<div class="t tc" style="right:88.6px;top:408.36px">1,943</div>
<div class="t tc" style="right:502.2px;top:429.92px">4191</div>
<div class="t tc" style="left:110.0px;top:429.92px">Orilla</div>
<div class="t tc" style="left:213.4px;top:429.92px">Riffken</div>
<div class="t tc" style="left:316.9px;top:429.92px">F</div>
<div class="t tc" style="right:88.6px;top:429.92px">1,962</div>
<div class="t tc" style="left:523.6px;top:429.92px">single</div>
<div class="t tc" style="right:502.2px;top:451.48px">102505</div>
<div class="t tc" style="left:110.0px;top:451.48px">Rich</div>
<div class="t tc" style="left:213.4px;top:451.48px">Abeles</div>
<div class="t tc" style="left:316.9px;top:451.48px">M</div>
<div class="t tc" style="right:88.6px;top:451.48px">1,976</div>
<div class="t tc" style="left:523.6px;top:451.48px">NeverM</div>
<div class="t tc" style="right:502.2px;top:473.04px">35578</div>
<div class="t tc" style="left:110.0px;top:473.04px">Ina</div>
<div class="t tc" style="left:213.4px;top:473.04px">Cummins</div>
<div class="t tc" style="left:316.9px;top:473.04px">F</div>
<div class="t tc" style="right:88.6px;top:473.04px">1,949</div>
<div class="t tc" style="left:523.6px;top:473.04px">single</div>
<div class="t tc" style="right:502.2px;top:494.60px">30196</div>
<div class="t tc" style="left:110.0px;top:494.60px">Haywood</div>
<div class="t tc" style="left:213.4px;top:494.60px">Murray</div>
<div class="t tc" style="left:316.9px;top:494.60px">M</div>
<div class="t tc" style="right:88.6px;top:494.60px">1,962</div>
<div class="t tc" style="right:502.2px;top:516.16px">35839</div>
<div class="t tc" style="left:110.0px;top:516.16px">Rebba</div>
<div class="t tc" style="left:213.4px;top:516.16px">Lyon</div>
<div class="t tc" style="left:316.9px;top:516.16px">F</div>
<div class="t tc" style="right:88.6px;top:516.16px">1,969</div>
<div class="t tc" style="left:523.6px;top:516.16px">single</div>
</body></html>
